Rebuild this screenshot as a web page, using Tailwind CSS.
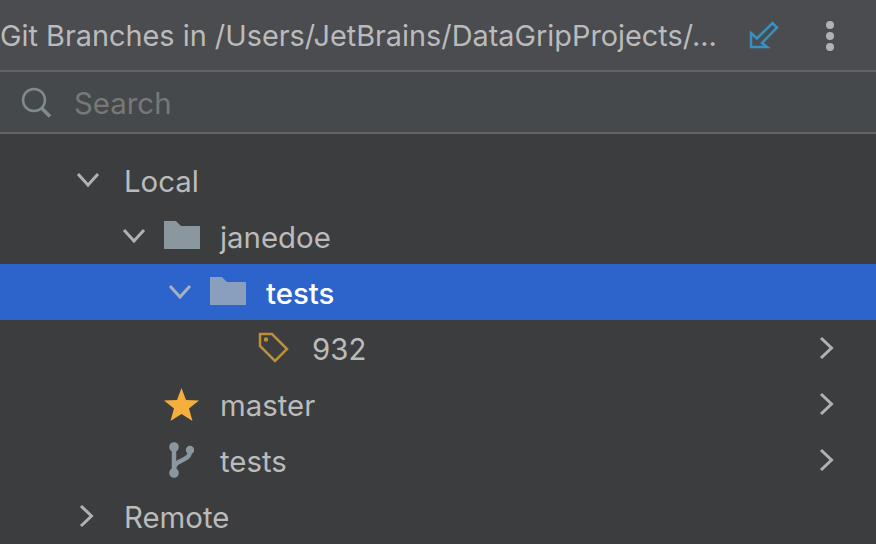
<!DOCTYPE html>
<html><head><meta charset="utf-8"><script src="https://cdn.jsdelivr.net/npm/@tailwindcss/browser@4"></script></head>
<body class="m-0 bg-[#3c3d3f]">
<div class="w-[876px] h-[544px] overflow-hidden bg-[#3c3d3f] font-['Inter','Liberation_Sans',sans-serif] text-[29.4px] text-[#bbbbbb]">
  <div class="h-[70px] bg-[#4a4c50] flex items-center justify-between">
    <span class="whitespace-nowrap pt-[1px] text-[28.85px]">Git Branches in /Users/JetBrains/DataGripProjects/...</span>
    <div class="flex items-center shrink-0 pr-[40px] gap-[45px]">
      <svg width="30" height="30" viewBox="0 0 30 30" fill="none" stroke="#3592c4" stroke-width="2.500"><path d="M2 27 V13 L8 18.500 L23.500 3 L28 7.500 L13 23 L18 27 Z"/></svg>
      <svg width="12" height="32" viewBox="0 0 12 32" fill="#afb1b3"><circle cx="6" cy="6" r="4"/><circle cx="6" cy="17" r="4"/><circle cx="6" cy="28" r="4"/></svg>
    </div>
  </div>
  <div class="h-[64px] bg-[#46494b] border-y-2 border-[#646464] flex items-center pl-[21px] gap-[22px]">
    <svg width="31" height="31" viewBox="0 0 31 31" fill="none" stroke="#7f8b91" stroke-width="2.500"><circle cx="13" cy="13" r="11"/><path d="M20.500 21 L29 29.500" stroke-width="3.500"/></svg>
    <span class="pt-[5px] text-[#787878]">Search</span>
  </div>
  <div class="pt-[18px]">
    <div class="h-[56px] flex items-center pl-[76px]">
      <svg class="mr-[24px]" width="24" height="16" viewBox="0 0 24 16" fill="none" stroke="#afb1b3" stroke-width="3"><path d="M2 2 L12 13 L22 2"/></svg>
      <span class="pt-[5px]">Local</span>
    </div>
    <div class="h-[56px] flex items-center pl-[122px]">
      <svg class="mr-[18px]" width="24" height="16" viewBox="0 0 24 16" fill="none" stroke="#afb1b3" stroke-width="3"><path d="M2 2 L12 13 L22 2"/></svg>
      <svg class="mr-[20px] -mt-[2px]" width="36" height="28" viewBox="0 0 36 28" fill="#8b979f"><path d="M0 0 H12 L17 5 H36 V28 H0 Z"/></svg>
      <span class="pt-[5px]">janedoe</span>
    </div>
    <div class="h-[56px] flex items-center pl-[168px] bg-[#2d64cc] text-white font-medium">
      <svg class="mr-[18px]" width="24" height="16" viewBox="0 0 24 16" fill="none" stroke="#a9b0bd" stroke-width="3"><path d="M2 2 L12 13 L22 2"/></svg>
      <svg class="mr-[20px] -mt-[2px]" width="36" height="28" viewBox="0 0 36 28" fill="#8a9fbe"><path d="M0 0 H12 L17 5 H36 V28 H0 Z"/></svg>
      <span class="pt-[5px]">tests</span>
    </div>
    <div class="h-[56px] flex items-center justify-between pl-[258px] pr-[42px]">
      <div class="flex items-center gap-[23px]">
        <svg width="31" height="31" viewBox="0 0 31 31" fill="none" stroke="#bd8f36" stroke-width="2.500"><path d="M2 2 H14 L29 17 L17 29 L2 14 Z"/><circle cx="8" cy="7.500" r="2.200" fill="#bd8f36" stroke="none"/></svg>
        <span class="pt-[5px]">932</span>
      </div>
      <svg width="15" height="24" viewBox="0 0 15 24" fill="none" stroke="#afb1b3" stroke-width="3"><path d="M2 2 L12.500 12 L2 22"/></svg>
    </div>
    <div class="h-[56px] flex items-center justify-between pl-[164px] pr-[42px]">
      <div class="flex items-center gap-[21px]">
        <svg width="35" height="34" viewBox="0 0 35 34" fill="#f4af3d"><path d="M17.500 1 L22 13 L35 13.500 L25 21.500 L28.500 34 L17.500 27 L6.500 34 L10 21.500 L0 13.500 L13 13 Z"/></svg>
        <span class="pt-[5px]">master</span>
      </div>
      <svg width="15" height="24" viewBox="0 0 15 24" fill="none" stroke="#afb1b3" stroke-width="3"><path d="M2 2 L12.500 12 L2 22"/></svg>
    </div>
    <div class="h-[56px] flex items-center justify-between pl-[169px] pr-[42px]">
      <div class="flex items-center gap-[26px]">
        <svg width="25" height="36" viewBox="0 0 25 36" fill="#8b979f"><circle cx="5" cy="5" r="4.800"/><circle cx="21" cy="8" r="4.200"/><circle cx="5" cy="31" r="4.800"/><path d="M5 5 V31" stroke="#8b979f" stroke-width="4.500" fill="none"/><path d="M21 9 C21 20 5 17 5 27" stroke="#8b979f" stroke-width="4.500" fill="none"/></svg>
        <span class="pt-[5px]">tests</span>
      </div>
      <svg width="15" height="24" viewBox="0 0 15 24" fill="none" stroke="#afb1b3" stroke-width="3"><path d="M2 2 L12.500 12 L2 22"/></svg>
    </div>
    <div class="h-[56px] flex items-center pl-[79px] gap-[30px]">
      <svg width="15" height="24" viewBox="0 0 15 24" fill="none" stroke="#afb1b3" stroke-width="3"><path d="M2 2 L12.500 12 L2 22"/></svg>
      <span class="pt-[5px]">Remote</span>
    </div>
  </div>
</div>
</body></html>
